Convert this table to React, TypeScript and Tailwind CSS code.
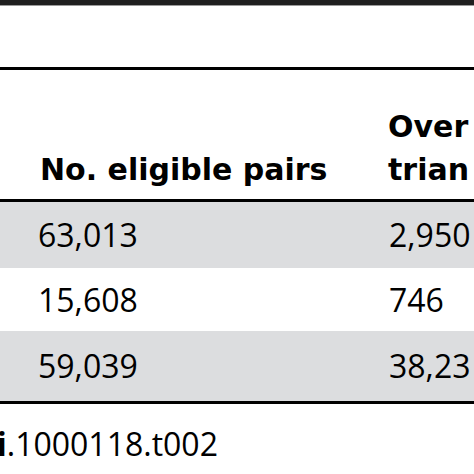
const rows = [
  { pairs: "63,013", tri: "2,950", shade: true, h: "h-[66px]" },
  { pairs: "15,608", tri: "746", shade: false, h: "h-[63px]" },
  { pairs: "59,039", tri: "38,23", shade: true, h: "h-[70px]" },
];

export default function App() {
  return (
    <div className="w-[474px] h-[474px] overflow-hidden bg-white text-black font-['Open_Sans',sans-serif]">
      {/* top rule from the previous table block */}
      <div className="h-[5px] bg-[#1f1f1f]" />
      <div className="h-px bg-[#9a9a9a]" />
      <div className="h-[61px]" />

      {/* header */}
      <div className="border-t-[3px] border-black">
        <div className="flex items-end pt-[35px] pb-[8px] text-[30px] leading-[43px] font-bold whitespace-nowrap font-['DejaVu_Sans',sans-serif]">
          <div className="w-[388px] pl-[40px]">No. eligible pairs</div>
          <div className="flex-1">
            <div>Over</div>
            <div>trian</div>
          </div>
        </div>
      </div>

      {/* body */}
      <div className="border-t-[3px] border-black">
        {rows.map((r) => (
          <div
            key={r.pairs}
            className={`flex items-center ${r.h} text-[32px] whitespace-nowrap ${r.shade ? "bg-[#dcdddf]" : "bg-white"}`}
          >
            <div className="w-[389px] pl-[38px]">{r.pairs}</div>
            <div className="flex-1">{r.tri}</div>
          </div>
        ))}
      </div>
      <div className="h-[3px] bg-black" />

      {/* caption */}
      <div className="pt-[18px] text-[32px] leading-[43px] whitespace-nowrap -ml-[3px]">
        <span className="font-bold">i</span>.1000118.t002
      </div>
    </div>
  );
}
